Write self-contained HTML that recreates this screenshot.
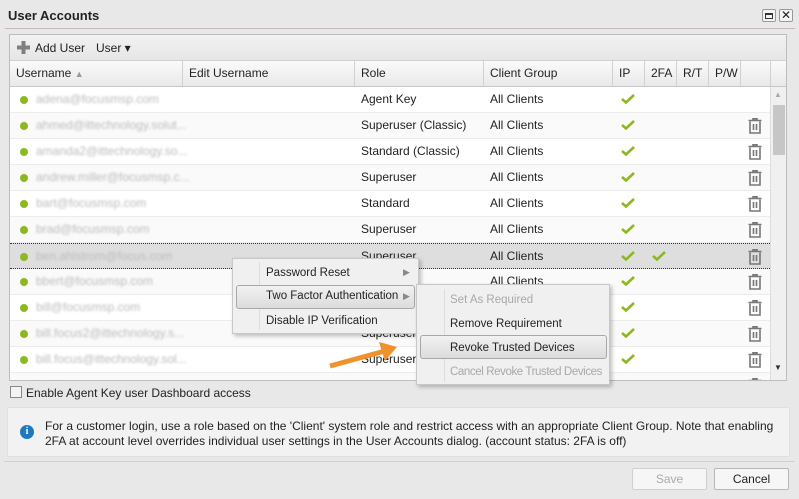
<!DOCTYPE html>
<html><head><style>
*{box-sizing:border-box;margin:0;padding:0}
body{width:799px;height:499px;background:#e8e8e8;font-family:"Liberation Sans",sans-serif;font-size:12px;color:#222;position:relative;overflow:hidden}
.abs{position:absolute}
.title{left:8px;top:8px;font-weight:bold;font-size:13px;color:#222}
.grid{left:9px;top:34px;width:778px;height:347px;border:1px solid #bdbdbd;background:#fff;overflow:hidden}
.tb{left:0;top:0;width:776px;height:26px;background:linear-gradient(#f2f2f2,#e6e6e6);border-bottom:1px solid #d0d0d0}
.hdr{left:0;top:26px;width:776px;height:26px;background:linear-gradient(#fafafa,#e9e9e9);border-bottom:1px solid #c8c8c8}
.hc{position:absolute;top:0;height:25px;line-height:25px;padding-left:6px;border-right:1px solid #d0d0d0}
.row{position:absolute;left:0;width:760px;height:26px;border-bottom:1px solid #ececec}
.row span{position:absolute;top:0;line-height:25px}
.dot{position:absolute;left:10px;top:9px;width:8px;height:8px;border-radius:50%;background:#8cb820}
.blur{left:26px;color:#bbb;filter:blur(1px)}
.chk{position:absolute;width:14px;height:10px}
.trash{position:absolute;left:738px;top:5px}
.menu{background:#f0f0f0;border:1px solid #c8c8c8;box-shadow:2px 2px 4px rgba(0,0,0,.25)}
.mi{position:absolute;left:33px;font-size:11.5px;white-space:nowrap}
.hl{position:absolute;border:1px solid #a8a8a8;border-radius:3px;background:linear-gradient(#f2f2f2,#dcdcdc)}
.btn{position:absolute;top:468px;height:22px;border:1px solid #b8b8b8;border-radius:2px;background:#f6f6f6;text-align:center;line-height:20px}
</style></head><body>
<div class="abs title">User Accounts</div>
<div class="abs" style="left:762px;top:9px;width:14px;height:13px;border:1px solid #999;border-radius:2px;background:#f4f4f4"><div style="margin:3px 2px;width:8px;height:6px;border:1px solid #333;border-top-width:2px"></div></div>
<div class="abs" style="left:779px;top:9px;width:14px;height:13px;border:1px solid #999;border-radius:2px;background:#f4f4f4;font-size:12px;line-height:11px;text-align:center">✕</div>
<div class="abs" style="left:5px;top:28px;width:790px;height:1px;background:#c8b8b8"></div>
<div class="abs grid">
 <div class="abs tb">
  <svg class="abs" style="left:7px;top:6px" width="13" height="13"><path d="M6.5 0V13M0 6.5H13" stroke="#808080" stroke-width="4"/></svg>
  <span class="abs" style="left:25px;top:6px">Add User</span>
  <span class="abs" style="left:86px;top:6px">User ▾</span>
 </div>
 <div class="abs hdr">
  <div class="hc" style="left:0;width:173px">Username <span style="color:#999;font-size:9px">▲</span></div>
  <div class="hc" style="left:173px;width:172px">Edit Username</div>
  <div class="hc" style="left:345px;width:129px">Role</div>
  <div class="hc" style="left:474px;width:129px">Client Group</div>
  <div class="hc" style="left:603px;width:32px">IP</div>
  <div class="hc" style="left:635px;width:32px">2FA</div>
  <div class="hc" style="left:667px;width:32px">R/T</div>
  <div class="hc" style="left:699px;width:32px">P/W</div>
  <div class="hc" style="left:731px;width:30px"></div>
 </div>
 <div id="rows"></div>
 <div class="abs" style="left:760px;top:52px;width:16px;height:295px;background:#f0f0f0;border-left:1px solid #ddd">
  <div style="position:absolute;left:3px;top:3px;color:#aaa;font-size:8px">▲</div>
  <div style="position:absolute;left:2px;top:18px;width:12px;height:50px;background:#c6c6c6"></div>
  <div style="position:absolute;left:3px;top:276px;color:#333;font-size:8px">▼</div>
 </div>
</div>
<div class="abs" style="left:10px;top:386px;width:12px;height:12px;border:1px solid #888;background:#f4f4f4"></div>
<div class="abs" style="left:26px;top:386px">Enable Agent Key user Dashboard access</div>
<div class="abs" style="left:7px;top:407px;width:783px;height:50px;background:#f2f2f2;border:1px solid #e0e0e0"></div>
<div class="abs" style="left:20px;top:425px;width:14px;height:14px;border-radius:50%;background:#1e78c2;color:#fff;font-size:10px;font-weight:bold;text-align:center;line-height:14px;font-family:'Liberation Serif',serif">i</div>
<div class="abs" style="left:45px;top:419px;width:740px;line-height:15px">For a customer login, use a role based on the 'Client' system role and restrict access with an appropriate Client Group. Note that enabling 2FA at account level overrides individual user settings in the User Accounts dialog. (account status: 2FA is off)</div>
<div class="abs" style="left:4px;top:461px;width:791px;height:1px;background:#d0d0d0"></div>
<div class="btn" style="left:632px;width:75px;color:#aaa;border-color:#d0d0d0">Save</div>
<div class="btn" style="left:714px;width:75px">Cancel</div>

<div class="abs menu" style="left:232px;top:258px;width:187px;height:76px">
 <div class="abs" style="left:26px;top:3px;width:1px;height:68px;background:#ddd"></div>
 <div class="mi" style="top:8px">Password Reset</div><span class="abs" style="left:170px;top:8px;color:#888;font-size:9px">▶</span>
 <div class="hl" style="left:3px;top:26px;width:179px;height:24px"></div>
 <div class="mi" style="top:31px">Two Factor Authentication</div><span class="abs" style="left:170px;top:32px;color:#888;font-size:9px">▶</span>
 <div class="mi" style="top:56px">Disable IP Verification</div>
</div>
<div class="abs menu" style="left:416px;top:284px;width:194px;height:101px">
 <div class="abs" style="left:27px;top:4px;width:1px;height:93px;background:#ddd"></div>
 <div class="mi" style="top:9px;color:#a8a8a8">Set As Required</div>
 <div class="mi" style="top:33px">Remove Requirement</div>
 <div class="hl" style="left:3px;top:50px;width:187px;height:24px"></div>
 <div class="mi" style="top:57px">Revoke Trusted Devices</div>
 <div class="mi" style="top:81px;color:#a8a8a8;letter-spacing:-0.4px">Cancel Revoke Trusted Devices</div>
</div>
<svg class="abs" style="left:325px;top:335px" width="80" height="40"><line x1="5" y1="31" x2="60" y2="16" stroke="#f0922c" stroke-width="5"/><polygon points="72,12 54,7 60,26" fill="#f0922c"/></svg>

<script>
var data=[["adena@focusmsp.com","Agent Key",0,0],["ahmed@ittechnology.solut...","Superuser (Classic)",0,1],["amanda2@ittechnology.so...","Standard (Classic)",0,1],["andrew.miller@focusmsp.c...","Superuser",0,1],["bart@focusmsp.com","Standard",0,1],["brad@focusmsp.com","Superuser",0,1],["ben.ahlstrom@focus.com","Superuser",1,1],["bbert@focusmsp.com","Superuser",0,1],["bill@focusmsp.com","Superuser",0,1],["bill.focus2@ittechnology.s...","Superuser",0,1],["bill.focus@ittechnology.sol...","Superuser",0,1],["bob.focus","Superuser",0,1]];
var ck='<svg class="chk" viewBox="0 0 14 10"><path d="M1 5 L5 8.5 L13 1" fill="none" stroke="#8cb820" stroke-width="2.6"/></svg>';
var tr='<svg class="trash" width="14" height="16" viewBox="0 0 14 16"><path d="M5 2V0.8H9V2M0.5 2.5H13.5M2 3.5V15H12V3.5" fill="none" stroke="#777" stroke-width="1.6"/><path d="M5.5 6V12M8.5 6V12" stroke="#777" stroke-width="1.6"/></svg>';
var h='';
data.forEach(function(d,i){var t=52+i*26;var sel=d[2];
h+='<div class="row" style="top:'+t+'px;background:'+(sel?'#dedede':(i%2?'#fafafa':'#fff'))+(sel?';border-top:1px dotted #333;border-bottom:1px dotted #333':'')+'"><div class="dot"></div><span class="blur">'+d[0]+'</span><span style="left:351px">'+d[1]+'</span><span style="left:480px">All Clients</span><span style="left:611px;top:7px;line-height:0">'+ck+'</span>'+(sel?'<span style="left:642px;top:7px;line-height:0">'+ck+'</span>':'')+(d[3]?tr:'')+'</div>';});
document.getElementById('rows').innerHTML=h;
</script>
</body></html>
